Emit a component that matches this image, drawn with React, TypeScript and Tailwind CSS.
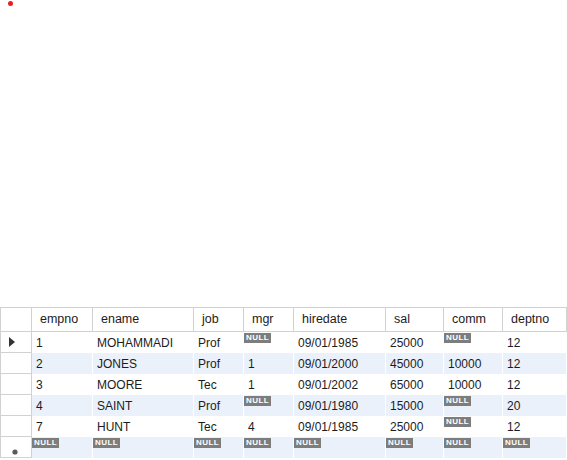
import React from "react";

type Cell = string | null;

const columns = ["empno", "ename", "job", "mgr", "hiredate", "sal", "comm", "deptno"];

const rows: Cell[][] = [
  ["1", "MOHAMMADI", "Prof", null, "09/01/1985", "25000", null, "12"],
  ["2", "JONES", "Prof", "1", "09/01/2000", "45000", "10000", "12"],
  ["3", "MOORE", "Tec", "1", "09/01/2002", "65000", "10000", "12"],
  ["4", "SAINT", "Prof", null, "09/01/1980", "15000", null, "20"],
  ["7", "HUNT", "Tec", "4", "09/01/1985", "25000", null, "12"],
];

const NullBadge = () => (
  <span className="absolute left-0 top-[1px] flex h-[10px] w-[27px] items-center justify-center bg-[#7d7d7d] text-[8px] font-bold leading-none tracking-[0.4px] text-white">
    NULL
  </span>
);

const RowHeader = ({ mark }: { mark?: "arrow" | "new" }) => (
  <div className="flex h-[21px] items-center border-r border-b border-[#d2d2d2] bg-white">
    {mark === "arrow" && (
      <svg width="6" height="10" viewBox="0 0 6 10" className="ml-[8px]">
        <path d="M0 0 L6 5 L0 10 Z" fill="#333" />
      </svg>
    )}
    {mark === "new" && (
      <svg width="6" height="6" viewBox="0 0 6 6" className="ml-[11px] mt-[9px]">
        <circle cx="3" cy="3" r="2.6" fill="#5a5a5a" />
      </svg>
    )}
  </div>
);

const DataCell = ({ value, blue }: { value: Cell; blue: boolean }) => (
  <div
    className={
      "relative flex h-[21px] items-center border-r border-white pl-[4px] " +
      (blue ? "bg-[#eaf1fb]" : "bg-white")
    }
  >
    {value === null ? <NullBadge /> : <span>{value}</span>}
  </div>
);

export default function App() {
  return (
    <div
      className="flex h-[460px] w-[567px] flex-col overflow-hidden bg-white text-[12px] text-[#1c1c1c]"
      style={{ fontFamily: '"Liberation Sans", Arial, sans-serif' }}
    >
      <div className="h-[307px] shrink-0">
        <div className="ml-[8px] mt-[1px] h-[5px] w-[5px] rounded-full bg-[#e42121]" />
      </div>
      <div className="grid grid-cols-[31px_61px_101px_50px_50px_92px_58px_59px_64px] border-l border-t border-[#d2d2d2]">
        <div className="h-[24px] border-r border-b border-[#d2d2d2] bg-white" />
        {columns.map((c) => (
          <div
            key={c}
            className="flex h-[24px] items-center border-r border-b border-[#d2d2d2] bg-white pl-[8px] text-[12.5px]"
          >
            {c}
          </div>
        ))}
        {rows.map((r, i) => (
          <React.Fragment key={i}>
            <RowHeader mark={i === 0 ? "arrow" : undefined} />
            {r.map((v, j) => (
              <DataCell key={j} value={v} blue={i % 2 === 1} />
            ))}
          </React.Fragment>
        ))}
        <RowHeader mark="new" />
        {columns.map((c) => (
          <DataCell key={c} value={null} blue />
        ))}
      </div>
    </div>
  );
}
